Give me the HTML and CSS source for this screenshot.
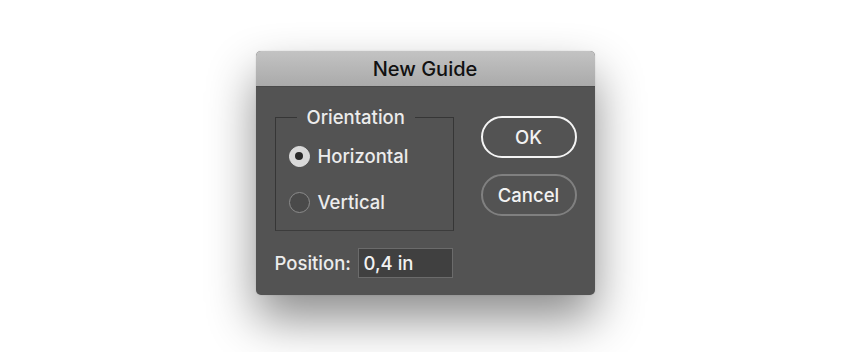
FILE: index.html
```html
<!DOCTYPE html>
<html lang="en">
<head>
  <meta charset="UTF-8" />
  <title>New Guide</title>
  <link rel="stylesheet" href="styles.css">
</head>
<body>
  <div class="dialog">
    <div class="title-bar">New Guide</div>

    <div class="dialog-body">
      <div class="main-row">
        <fieldset class="orientation">
          <legend>Orientation</legend>
          <label class="radio-row">
            <span class="radio checked"></span>
            <span>Horizontal</span>
          </label>
          <label class="radio-row">
            <span class="radio"></span>
            <span>Vertical</span>
          </label>
        </fieldset>

        <div class="buttons">
          <div class="btn primary">OK</div>
          <div class="btn">Cancel</div>
        </div>
      </div>

      <div class="position-row">
        <span class="pos-label">Position:</span>
        <div class="field">0,4 in</div>
      </div>
    </div>
  </div>
</body>
</html>
```

FILE: styles.css
```css
html, body {
  margin: 0;
  padding: 0;
  background: #fff;
  width: 850px;
  height: 352px;
  overflow: hidden;
  font-family: Inter, 'Liberation Sans', sans-serif;
}

body {
  display: flex;
  justify-content: center;
  align-items: flex-start;
}

.dialog {
  width: 339px;
  margin-top: 51px;
  border-radius: 5px;
  overflow: hidden;
  background: #535353;
  box-shadow: 0 0 2px rgba(0,0,0,0.12), 0 24px 48px rgba(0,0,0,0.45);
}

.title-bar {
  height: 35px;
  line-height: 37px;
  text-align: center;
  font-size: 20px;
  font-weight: 500;
  color: #111;
  background: linear-gradient(to bottom, #c3c3c3, #aaaaaa);
  border-bottom: 1px solid #4a4a4a;
}

.dialog-body {
  padding: 19px 18px 17px 19px;
  color: #ececec;
  font-size: 18.5px;
  font-weight: 500;
}

.main-row {
  display: flex;
  align-items: flex-start;
  gap: 27px;
}

/* rahmen mit legende */
.orientation {
  box-sizing: border-box;
  width: 179px;
  margin: 0;
  padding: 5px 0 5px 13px;
  border: 1px solid #363636;
  border-bottom-color: #3c3c3c;
}

.orientation legend {
  margin-left: 8px;
  padding: 0 10px;
  line-height: 22px;
}

.radio-row {
  display: flex;
  align-items: center;
  gap: 8px;
  height: 46px;
}

.radio {
  width: 19px;
  height: 19px;
  border-radius: 50%;
  border: 1px solid #8c8c8c;
  background: #4a4a4a;
  display: flex;
  align-items: center;
  justify-content: center;
}

.radio.checked {
  background: #d9d9d9;
  border-color: #e2e2e2;
}

.radio.checked::after {
  content: "";
  width: 8px;
  height: 8px;
  border-radius: 50%;
  background: #2a2a2a;
}

.buttons {
  display: flex;
  flex-direction: column;
  gap: 16px;
  margin-top: 10px;
}

.btn {
  width: 92px;
  height: 38px;
  line-height: 38px;
  text-align: center;
  border-radius: 21px;
  border: 2px solid #808080;
  color: #f2f2f2;
}

.btn.primary {
  border-color: #f4f4f4;
}

.position-row {
  display: flex;
  align-items: center;
  margin-top: 17px;
}

.pos-label {
  width: 83px;
}

.field {
  width: 88px;
  height: 28px;
  line-height: 29px;
  padding-left: 5px;
  background: #404040;
  border: 1px solid #6b6b6b;
  color: #f2f2f2;
}
```
